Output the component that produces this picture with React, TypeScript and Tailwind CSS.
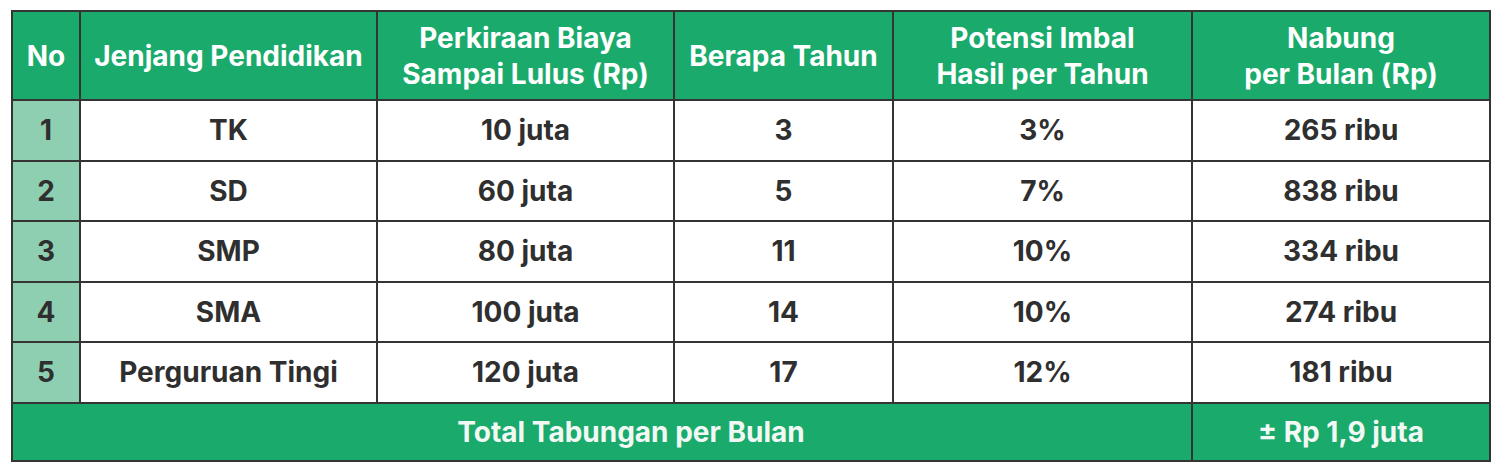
import React from 'react'

const rows = [
  { no: 1, jenjang: 'TK', biaya: '10 juta', tahun: '3', imbal: '3%', nabung: '265 ribu' },
  { no: 2, jenjang: 'SD', biaya: '60 juta', tahun: '5', imbal: '7%', nabung: '838 ribu' },
  { no: 3, jenjang: 'SMP', biaya: '80 juta', tahun: '11', imbal: '10%', nabung: '334 ribu' },
  { no: 4, jenjang: 'SMA', biaya: '100 juta', tahun: '14', imbal: '10%', nabung: '274 ribu' },
  { no: 5, jenjang: 'Perguruan Tingi', biaya: '120 juta', tahun: '17', imbal: '12%', nabung: '181 ribu' },
]

export default function App() {
  return (
    <div className="w-[1500px] h-[471px] bg-white pt-[10px] pl-[11px] font-['Inter','Liberation_Sans',sans-serif]">
      <table className="w-[1478px] table-fixed border-collapse border-2 border-[#343434] text-[28px] font-bold leading-[36px]">
        <colgroup>
          <col className="w-[68px]" />
          <col className="w-[297px]" />
          <col className="w-[297px]" />
          <col className="w-[219px]" />
          <col className="w-[299px]" />
          <col className="w-[298px]" />
        </colgroup>
        <thead>
          <tr className="h-[89px] bg-[#1aab6c] text-white">
            <th className="border-2 border-[#343434] font-bold">No</th>
            <th className="border-2 border-[#343434] font-bold">Jenjang Pendidikan</th>
            <th className="border-2 border-[#343434] font-bold">
              Perkiraan Biaya
              <br />
              Sampai Lulus (Rp)
            </th>
            <th className="border-2 border-[#343434] font-bold">Berapa Tahun</th>
            <th className="border-2 border-[#343434] font-bold">
              Potensi Imbal
              <br />
              Hasil per Tahun
            </th>
            <th className="border-2 border-[#343434] font-bold">
              Nabung
              <br />
              per Bulan (Rp)
            </th>
          </tr>
        </thead>
        <tbody className="text-[#2f2f2f] text-center">
          {rows.map((r) => (
            <tr key={r.no} className="h-[60.5px]">
              <td className="border-2 border-[#343434] bg-[#8fcfb1]">{r.no}</td>
              <td className="border-2 border-[#343434]">{r.jenjang}</td>
              <td className="border-2 border-[#343434]">{r.biaya}</td>
              <td className="border-2 border-[#343434]">{r.tahun}</td>
              <td className="border-2 border-[#343434]">{r.imbal}</td>
              <td className="border-2 border-[#343434]">{r.nabung}</td>
            </tr>
          ))}
        </tbody>
        <tfoot>
          <tr className="h-[58px] bg-[#1aab6c] text-[#f2f8f4]">
            <td colSpan={5} className="border-2 border-[#343434] pl-[58px] text-center">
              Total Tabungan per Bulan
            </td>
            <td className="border-2 border-[#343434] text-center">± Rp 1,9 juta</td>
          </tr>
        </tfoot>
      </table>
    </div>
  )
}
